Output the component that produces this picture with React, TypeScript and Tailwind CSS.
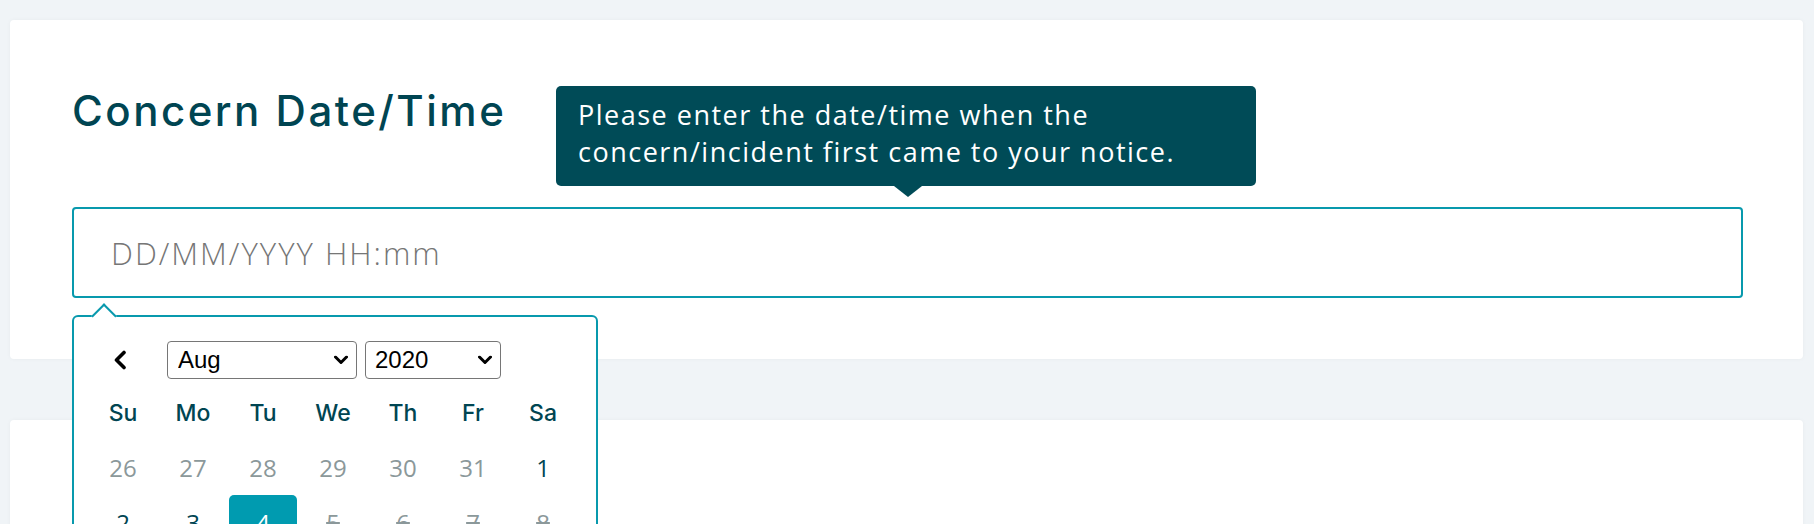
import React from "react"

const weekDays = ["Su", "Mo", "Tu", "We", "Th", "Fr", "Sa"]

type Day = { n: number; kind: "outside" | "current" | "selected" | "disabled" }

const days: Day[] = [
  { n: 26, kind: "outside" },
  { n: 27, kind: "outside" },
  { n: 28, kind: "outside" },
  { n: 29, kind: "outside" },
  { n: 30, kind: "outside" },
  { n: 31, kind: "outside" },
  { n: 1, kind: "current" },
  { n: 2, kind: "current" },
  { n: 3, kind: "current" },
  { n: 4, kind: "selected" },
  { n: 5, kind: "disabled" },
  { n: 6, kind: "disabled" },
  { n: 7, kind: "disabled" },
  { n: 8, kind: "disabled" },
]

function SelectChevron() {
  return (
    <svg width="14" height="9" viewBox="0 0 14 9" className="pointer-events-none absolute right-[9px] top-1/2 -translate-y-1/2">
      <polyline points="1.5,1.5 7,7 12.5,1.5" fill="none" stroke="#000" strokeWidth="3" strokeLinecap="round" strokeLinejoin="round" />
    </svg>
  )
}

function DayCell({ day }: { day: Day }) {
  const base = "h-[55px] flex items-center justify-center text-[24px] leading-none"
  if (day.kind === "selected") {
    return <div className={`${base} bg-[#009bb0] text-white rounded-[5px]`}>{day.n}</div>
  }
  if (day.kind === "current") {
    return <div className={`${base} text-[#004552]`}>{day.n}</div>
  }
  if (day.kind === "disabled") {
    return <div className={`${base} text-[#8b989a] line-through`}>{day.n}</div>
  }
  return <div className={`${base} text-[#8b989a]`}>{day.n}</div>
}

function Calendar() {
  return (
    <div className="absolute left-[62px] top-[295px] z-10 w-[526px] h-[420px] bg-white border-2 border-[#0899ad] rounded-[6px]">
      {/* caret pointing up at the input */}
      <div className="absolute left-[21px] top-[-10px] w-[18px] h-[18px] rotate-45 bg-white border-l-2 border-t-2 border-[#0899ad]" />

      <div className="flex items-center mt-[24px] pl-[39px] h-[38px]">
        <svg width="14" height="20" viewBox="0 0 14 20">
          <polyline points="11,2.5 3.5,10 11,17.5" fill="none" stroke="#000" strokeWidth="3.6" strokeLinecap="round" strokeLinejoin="round" />
        </svg>
        <div className="relative ml-[40px] w-[190px] h-[38px]">
          <select className="appearance-none w-full h-full border border-[#767676] rounded-[4px] bg-white pl-[10px] text-[24px] text-black font-['Liberation_Sans',Arial,sans-serif]" defaultValue="Aug">
            <option>Aug</option>
          </select>
          <SelectChevron />
        </div>
        <div className="relative ml-[8px] w-[136px] h-[38px]">
          <select className="appearance-none w-full h-full border border-[#767676] rounded-[4px] bg-white pl-[9px] text-[24px] text-black font-['Liberation_Sans',Arial,sans-serif]" defaultValue="2020">
            <option>2020</option>
          </select>
          <SelectChevron />
        </div>
      </div>

      <div className="ml-[15px] mt-[14px] grid grid-cols-[repeat(7,68px)] gap-x-[2px]">
        {weekDays.map((d) => (
          <div key={d} className="h-[40px] flex items-center justify-center text-[23px] leading-none font-medium font-['Inter',sans-serif] text-[#004552]">
            {d}
          </div>
        ))}
      </div>

      <div className="ml-[15px] mt-[7px] grid grid-cols-[repeat(7,68px)] gap-x-[2px]">
        {days.map((d, i) => (
          <DayCell key={i} day={d} />
        ))}
      </div>
    </div>
  )
}

export default function App() {
  return (
    <div className="h-screen overflow-hidden bg-[#f0f4f7] pt-[20px] font-['Open_Sans','Noto_Sans',sans-serif]">
      <div className="relative ml-[10px] mr-[11px] bg-white rounded-[4px] shadow-[0_0_4px_rgba(0,40,60,0.04)] pt-[65px] pb-[61px] pl-[62px] pr-[60px]">
        <h1 className="text-[42px] leading-[52px] font-medium font-['Inter',sans-serif] tracking-[2.5px] text-[#004552]">Concern Date/Time</h1>

        <input
          type="text"
          placeholder="DD/MM/YYYY HH:mm"
          className="mt-[70px] block w-full h-[91px] border-2 border-[#0899ad] rounded-[4px] pl-[37px] text-[31px] font-light tracking-[2px] outline-none placeholder:text-[#767676]"
        />

        <div className="absolute left-[546px] top-[66px] w-[700px] h-[100px] bg-[#004b57] rounded-[5px] pt-[10px] pl-[22px] text-white text-[27px] leading-[37px] tracking-[1.5px]">
          <span className="block whitespace-nowrap">Please enter the date/time when the</span>
          <span className="block whitespace-nowrap">concern/incident first came to your notice.</span>
          <div className="absolute left-[338px] top-[100px] w-0 h-0 border-l-[14px] border-r-[14px] border-t-[11px] border-l-transparent border-r-transparent border-t-[#004b57]" />
        </div>

        <Calendar />
      </div>

      <div className="mt-[61px] ml-[10px] mr-[11px] h-[300px] bg-white rounded-[4px] shadow-[0_0_4px_rgba(0,40,60,0.04)]" />
    </div>
  )
}
